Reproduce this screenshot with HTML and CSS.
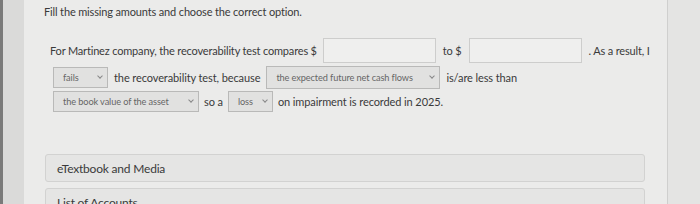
FILE: index.html
```html
<!DOCTYPE html>
<html>
<head>
<meta charset="utf-8">
<link rel="stylesheet" href="styles.css">
</head>
<body>
<div class="edge"></div>
<div class="side"></div>
<div class="panel">
  <p class="title">Fill the missing amounts and choose the correct option.</p>
  <div class="question">
    <div class="row row1">
      <span class="txt">For Martinez company, the recoverability test compares $</span>
      <span class="input"></span>
      <span class="txt">to $</span>
      <span class="input"></span>
      <span class="txt">. As a result, I</span>
    </div>
    <div class="row row2">
      <span class="select w-fails">fails<i class="chev"></i></span>
      <span class="txt">the recoverability test, because</span>
      <span class="select w-flows">the expected future net cash flows<i class="chev"></i></span>
      <span class="txt">is/are less than</span>
    </div>
    <div class="row row3">
      <span class="select w-book">the book value of the asset<i class="chev"></i></span>
      <span class="txt">so a</span>
      <span class="select w-loss">loss<i class="chev"></i></span>
      <span class="txt">on impairment is recorded in 2025.</span>
    </div>
  </div>
  <div class="card">eTextbook and Media</div>
  <div class="card card2">List of Accounts</div>
</div>
<div class="rest"></div>
</body>
</html>
```
FILE: styles.css
```css
html, body {
  margin: 0;
  padding: 0;
  height: 204px;
  overflow: hidden;
}
body {
  display: flex;
  background: #e2e2e1;
  font-family: Lato, "Open Sans", sans-serif;
  color: #3a3a3a;
}
.edge {
  width: 3px;
  background: #7a7a7a;
  flex: none;
}
.side {
  width: 21px;
  background: #dadad9;
  flex: none;
}
.panel {
  width: 644px;
  flex: none;
  background: #ebebea;
  border-right: 1px solid #cfcfce;
  padding-top: 5px;
  box-sizing: border-box;
  overflow: hidden;
}
.rest {
  flex: 1;
  background: #e4e4e3;
}
.title {
  margin: 0 0 0 20px;
  font-size: 11px;
  line-height: 14px;
  letter-spacing: -0.15px;
}
.question {
  margin-top: 19px;
  padding-left: 26px;
  display: flex;
  flex-direction: column;
}
.row {
  display: flex;
  align-items: center;
  font-size: 11px;
  white-space: nowrap;
}
.txt {
  letter-spacing: -0.1px;
}
.row1 {
  height: 25px;
  gap: 7px;
}
.row1 .txt {
  letter-spacing: -0.17px;
}
.row1 .txt:first-child {
  margin-right: -1px;
}
.row2 {
  margin-top: 3px;
  height: 22px;
  padding-left: 3px;
  gap: 6px;
}
.row3 {
  margin-top: 2px;
  height: 22px;
  padding-left: 3px;
  gap: 5px;
}
.input {
  display: block;
  width: 113px;
  height: 25px;
  box-sizing: border-box;
  border: 1px solid #cdcdcc;
  background: #efefee;
}
.select {
  position: relative;
  display: flex;
  align-items: center;
  box-sizing: border-box;
  height: 21px;
  border: 1px solid #b9b9b8;
  background: #e1e1e0;
  font-size: 9.2px;
  letter-spacing: -0.1px;
  color: #666;
  padding-left: 9px;
}
.chev {
  position: absolute;
  right: 5px;
  top: 6px;
  width: 3px;
  height: 3px;
  border-right: 1px solid #888;
  border-bottom: 1px solid #888;
  transform: rotate(45deg);
}
.w-fails { width: 55px; }
.w-flows { width: 174px; height: 23px; }
.w-flows .chev { top: 7px; }
.w-book { width: 146px; }
.w-loss { width: 45px; }
.card {
  margin: 42px 22px 0 21px;
  height: 28px;
  box-sizing: border-box;
  border: 1px solid #d2d2d1;
  border-radius: 3px;
  background: #e5e5e4;
  font-size: 12px;
  padding-left: 11px;
  display: flex;
  align-items: center;
  letter-spacing: -0.2px;
}
.card2 {
  margin-top: 6px;
  align-items: flex-start;
  padding-top: 6px;
}
```
